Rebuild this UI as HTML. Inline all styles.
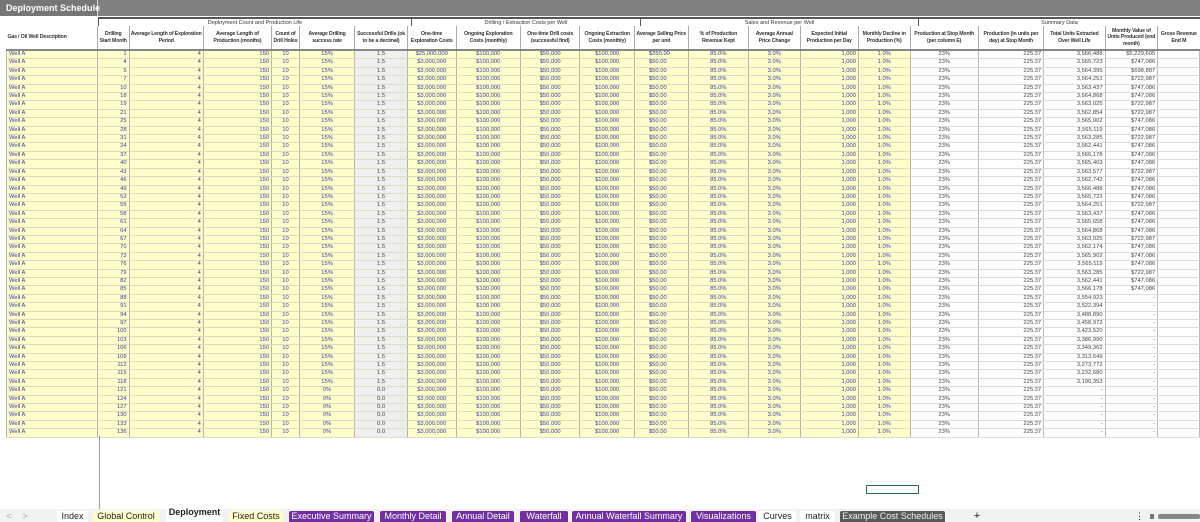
<!DOCTYPE html>
<html><head><meta charset="utf-8">
<style>
*{margin:0;padding:0;box-sizing:border-box}
body{width:1200px;height:522px;overflow:hidden;background:#fff;font-family:"Liberation Sans",sans-serif;position:relative}
.title{position:absolute;left:0;top:0;width:1200px;height:16px;background:#808080}
.title .lab{position:absolute;left:0;top:0;width:98px;height:16px;background:#767676;border-right:1px solid #ddd}
.title .txt{position:absolute;left:6px;top:0;color:#fff;font-weight:bold;font-size:9px;line-height:16px;white-space:nowrap}
.grp{position:absolute;top:17px;height:9px;border-top:2px solid #555;border-left:1px solid #555;font-size:5.5px;line-height:8px;text-align:center;color:#333}
table{position:absolute;left:6px;top:26px;border-collapse:collapse;table-layout:fixed;font-size:5.8px;color:#3a3aa0}
th{font-weight:bold;color:#333;height:24px;font-size:5.2px;letter-spacing:-0.15px;line-height:6.5px;border-left:1px solid #aaa;border-bottom:2px solid #888;text-align:center;background:#fff;vertical-align:middle;padding:0 1px}
th:first-child{text-align:left;border-left:none}
td{height:8.39px;line-height:7.4px;border-left:1px solid #b8b8a0;border-right:1px solid #b8b8a0;border-bottom:1px solid #dcdcc0;padding:0 2px;white-space:nowrap;overflow:hidden;background:#ffffcc;vertical-align:middle}
td:nth-child(1){text-align:left}
td:nth-child(2),td:nth-child(3),td:nth-child(4){text-align:right}
td:nth-child(5),td:nth-child(6),td:nth-child(7){text-align:center}
td:nth-child(7){background:#efefef;color:#444}
td:nth-child(n+8){text-align:center}
td:nth-child(12){text-align:left;padding-left:14px}
td:nth-child(15){text-align:right}
td:nth-child(n+17){background:#fff;border-left-color:#bbb;border-right-color:#bbb;border-bottom-color:#ddd}
td:nth-child(17){color:#444}
td:nth-child(18),td:nth-child(19),td:nth-child(20){text-align:right;color:#444}
.vline{position:absolute;left:99px;top:436px;width:1px;height:73px;background:#999}
.sel{position:absolute;left:866px;top:485px;width:53px;height:9px;border:1px solid #217346}
.tabs{position:absolute;left:0;top:509px;width:1200px;height:13px;background:#f2f2f2;font-size:9px}
.tab{position:absolute;top:2px;height:11px;line-height:11px;text-align:center;color:#222;border-radius:2px 2px 0 0;white-space:nowrap}
.y{background:#ffffcc}.p{background:#7030a0;color:#fff}.w{background:#fff}
</style></head><body>
<div class="title"><div class="lab"></div><div class="txt">Deployment Schedule</div></div>
<div class="grp" style="left:98px;width:313px">Deployment Count and Production Life</div>
<div class="grp" style="left:411px;width:229px">Drilling / Extraction Costs per Well</div>
<div class="grp" style="left:640px;width:278px">Sales and Revenue per Well</div>
<div class="grp" style="left:918px;width:282px">Summary Data</div>
<table>
<colgroup><col style="width:92px"><col style="width:32px"><col style="width:75px"><col style="width:69px"><col style="width:28px"><col style="width:56px"><col style="width:53px"><col style="width:49px"><col style="width:65px"><col style="width:60px"><col style="width:55px"><col style="width:54px"><col style="width:61px"><col style="width:52px"><col style="width:59px"><col style="width:52px"><col style="width:69px"><col style="width:66px"><col style="width:62px"><col style="width:53px"><col style="width:42px"></colgroup>
<tr><th>Gas / Oil Well Description</th><th>Drilling Start Month</th><th>Average Length of Exploration Period</th><th>Average Length of Production (months)</th><th>Count of Drill Holes</th><th>Average Drilling success rate</th><th>Successful Drills (ok to be a decimal)</th><th>One-time Exploration Costs</th><th>Ongoing Exploration Costs (monthly)</th><th>One-time Drill costs (successful find)</th><th>Ongoing Extraction Costs (monthly)</th><th>Average Selling Price per unit</th><th>% of Production Revenue Kept</th><th>Average Annual Price Change</th><th>Expected Initial Production per Day</th><th>Monthly Decline in Production (%)</th><th>Production at Stop Month (per column E)</th><th>Production (in units per day) at Stop Month</th><th>Total Units Extracted Over Well Life</th><th>Monthly Value of Units Produced (end month)</th><th>Gross Revenue End M</th></tr>
<tr><td>Well A</td><td>1</td><td>4</td><td>150</td><td>10</td><td>15%</td><td>1.5</td><td>$25,000,000</td><td>$100,000</td><td>$50,000</td><td>$100,000</td><td>$350.00</td><td>85.0%</td><td>3.0%</td><td>1,000</td><td>1.0%</td><td>23%</td><td>225.37</td><td>3,566,488</td><td>$5,229,605</td><td></td></tr>
<tr><td>Well A</td><td>4</td><td>4</td><td>150</td><td>10</td><td>15%</td><td>1.5</td><td>$3,000,000</td><td>$100,000</td><td>$50,000</td><td>$100,000</td><td>$50.00</td><td>85.0%</td><td>3.0%</td><td>1,000</td><td>1.0%</td><td>23%</td><td>225.37</td><td>3,565,723</td><td>$747,086</td><td></td></tr>
<tr><td>Well A</td><td>5</td><td>4</td><td>150</td><td>10</td><td>15%</td><td>1.5</td><td>$3,000,000</td><td>$100,000</td><td>$50,000</td><td>$100,000</td><td>$50.00</td><td>85.0%</td><td>3.0%</td><td>1,000</td><td>1.0%</td><td>23%</td><td>225.37</td><td>3,564,395</td><td>$698,887</td><td></td></tr>
<tr><td>Well A</td><td>7</td><td>4</td><td>150</td><td>10</td><td>15%</td><td>1.5</td><td>$3,000,000</td><td>$100,000</td><td>$50,000</td><td>$100,000</td><td>$50.00</td><td>85.0%</td><td>3.0%</td><td>1,000</td><td>1.0%</td><td>23%</td><td>225.37</td><td>3,564,251</td><td>$722,987</td><td></td></tr>
<tr><td>Well A</td><td>10</td><td>4</td><td>150</td><td>10</td><td>15%</td><td>1.5</td><td>$3,000,000</td><td>$100,000</td><td>$50,000</td><td>$100,000</td><td>$50.00</td><td>85.0%</td><td>3.0%</td><td>1,000</td><td>1.0%</td><td>23%</td><td>225.37</td><td>3,563,437</td><td>$747,086</td><td></td></tr>
<tr><td>Well A</td><td>18</td><td>4</td><td>150</td><td>10</td><td>15%</td><td>1.5</td><td>$3,000,000</td><td>$100,000</td><td>$50,000</td><td>$100,000</td><td>$50.00</td><td>85.0%</td><td>3.0%</td><td>1,000</td><td>1.0%</td><td>23%</td><td>225.37</td><td>3,564,868</td><td>$747,086</td><td></td></tr>
<tr><td>Well A</td><td>19</td><td>4</td><td>150</td><td>10</td><td>15%</td><td>1.5</td><td>$3,000,000</td><td>$100,000</td><td>$50,000</td><td>$100,000</td><td>$50.00</td><td>85.0%</td><td>3.0%</td><td>1,000</td><td>1.0%</td><td>23%</td><td>225.37</td><td>3,563,025</td><td>$722,987</td><td></td></tr>
<tr><td>Well A</td><td>21</td><td>4</td><td>150</td><td>10</td><td>15%</td><td>1.5</td><td>$3,000,000</td><td>$100,000</td><td>$50,000</td><td>$100,000</td><td>$50.00</td><td>85.0%</td><td>3.0%</td><td>1,000</td><td>1.0%</td><td>23%</td><td>225.37</td><td>3,562,854</td><td>$722,987</td><td></td></tr>
<tr><td>Well A</td><td>25</td><td>4</td><td>150</td><td>10</td><td>15%</td><td>1.5</td><td>$3,000,000</td><td>$100,000</td><td>$50,000</td><td>$100,000</td><td>$50.00</td><td>85.0%</td><td>3.0%</td><td>1,000</td><td>1.0%</td><td>23%</td><td>225.37</td><td>3,565,902</td><td>$747,086</td><td></td></tr>
<tr><td>Well A</td><td>28</td><td>4</td><td>150</td><td>10</td><td>15%</td><td>1.5</td><td>$3,000,000</td><td>$100,000</td><td>$50,000</td><td>$100,000</td><td>$50.00</td><td>85.0%</td><td>3.0%</td><td>1,000</td><td>1.0%</td><td>23%</td><td>225.37</td><td>3,565,119</td><td>$747,086</td><td></td></tr>
<tr><td>Well A</td><td>31</td><td>4</td><td>150</td><td>10</td><td>15%</td><td>1.5</td><td>$3,000,000</td><td>$100,000</td><td>$50,000</td><td>$100,000</td><td>$50.00</td><td>85.0%</td><td>3.0%</td><td>1,000</td><td>1.0%</td><td>23%</td><td>225.37</td><td>3,563,285</td><td>$722,987</td><td></td></tr>
<tr><td>Well A</td><td>34</td><td>4</td><td>150</td><td>10</td><td>15%</td><td>1.5</td><td>$3,000,000</td><td>$100,000</td><td>$50,000</td><td>$100,000</td><td>$50.00</td><td>85.0%</td><td>3.0%</td><td>1,000</td><td>1.0%</td><td>23%</td><td>225.37</td><td>3,562,441</td><td>$747,086</td><td></td></tr>
<tr><td>Well A</td><td>37</td><td>4</td><td>150</td><td>10</td><td>15%</td><td>1.5</td><td>$3,000,000</td><td>$100,000</td><td>$50,000</td><td>$100,000</td><td>$50.00</td><td>85.0%</td><td>3.0%</td><td>1,000</td><td>1.0%</td><td>23%</td><td>225.37</td><td>3,566,178</td><td>$747,086</td><td></td></tr>
<tr><td>Well A</td><td>40</td><td>4</td><td>150</td><td>10</td><td>15%</td><td>1.5</td><td>$3,000,000</td><td>$100,000</td><td>$50,000</td><td>$100,000</td><td>$50.00</td><td>85.0%</td><td>3.0%</td><td>1,000</td><td>1.0%</td><td>23%</td><td>225.37</td><td>3,565,403</td><td>$747,086</td><td></td></tr>
<tr><td>Well A</td><td>43</td><td>4</td><td>150</td><td>10</td><td>15%</td><td>1.5</td><td>$3,000,000</td><td>$100,000</td><td>$50,000</td><td>$100,000</td><td>$50.00</td><td>85.0%</td><td>3.0%</td><td>1,000</td><td>1.0%</td><td>23%</td><td>225.37</td><td>3,563,577</td><td>$722,987</td><td></td></tr>
<tr><td>Well A</td><td>46</td><td>4</td><td>150</td><td>10</td><td>15%</td><td>1.5</td><td>$3,000,000</td><td>$100,000</td><td>$50,000</td><td>$100,000</td><td>$50.00</td><td>85.0%</td><td>3.0%</td><td>1,000</td><td>1.0%</td><td>23%</td><td>225.37</td><td>3,562,742</td><td>$747,086</td><td></td></tr>
<tr><td>Well A</td><td>49</td><td>4</td><td>150</td><td>10</td><td>15%</td><td>1.5</td><td>$3,000,000</td><td>$100,000</td><td>$50,000</td><td>$100,000</td><td>$50.00</td><td>85.0%</td><td>3.0%</td><td>1,000</td><td>1.0%</td><td>23%</td><td>225.37</td><td>3,566,488</td><td>$747,086</td><td></td></tr>
<tr><td>Well A</td><td>52</td><td>4</td><td>150</td><td>10</td><td>15%</td><td>1.5</td><td>$3,000,000</td><td>$100,000</td><td>$50,000</td><td>$100,000</td><td>$50.00</td><td>85.0%</td><td>3.0%</td><td>1,000</td><td>1.0%</td><td>23%</td><td>225.37</td><td>3,565,723</td><td>$747,086</td><td></td></tr>
<tr><td>Well A</td><td>55</td><td>4</td><td>150</td><td>10</td><td>15%</td><td>1.5</td><td>$3,000,000</td><td>$100,000</td><td>$50,000</td><td>$100,000</td><td>$50.00</td><td>85.0%</td><td>3.0%</td><td>1,000</td><td>1.0%</td><td>23%</td><td>225.37</td><td>3,564,251</td><td>$722,987</td><td></td></tr>
<tr><td>Well A</td><td>58</td><td>4</td><td>150</td><td>10</td><td>15%</td><td>1.5</td><td>$3,000,000</td><td>$100,000</td><td>$50,000</td><td>$100,000</td><td>$50.00</td><td>85.0%</td><td>3.0%</td><td>1,000</td><td>1.0%</td><td>23%</td><td>225.37</td><td>3,563,437</td><td>$747,086</td><td></td></tr>
<tr><td>Well A</td><td>61</td><td>4</td><td>150</td><td>10</td><td>15%</td><td>1.5</td><td>$3,000,000</td><td>$100,000</td><td>$50,000</td><td>$100,000</td><td>$50.00</td><td>85.0%</td><td>3.0%</td><td>1,000</td><td>1.0%</td><td>23%</td><td>225.37</td><td>3,565,658</td><td>$747,086</td><td></td></tr>
<tr><td>Well A</td><td>64</td><td>4</td><td>150</td><td>10</td><td>15%</td><td>1.5</td><td>$3,000,000</td><td>$100,000</td><td>$50,000</td><td>$100,000</td><td>$50.00</td><td>85.0%</td><td>3.0%</td><td>1,000</td><td>1.0%</td><td>23%</td><td>225.37</td><td>3,564,868</td><td>$747,086</td><td></td></tr>
<tr><td>Well A</td><td>67</td><td>4</td><td>150</td><td>10</td><td>15%</td><td>1.5</td><td>$3,000,000</td><td>$100,000</td><td>$50,000</td><td>$100,000</td><td>$50.00</td><td>85.0%</td><td>3.0%</td><td>1,000</td><td>1.0%</td><td>23%</td><td>225.37</td><td>3,563,025</td><td>$722,987</td><td></td></tr>
<tr><td>Well A</td><td>70</td><td>4</td><td>150</td><td>10</td><td>15%</td><td>1.5</td><td>$3,000,000</td><td>$100,000</td><td>$50,000</td><td>$100,000</td><td>$50.00</td><td>85.0%</td><td>3.0%</td><td>1,000</td><td>1.0%</td><td>23%</td><td>225.37</td><td>3,562,174</td><td>$747,086</td><td></td></tr>
<tr><td>Well A</td><td>73</td><td>4</td><td>150</td><td>10</td><td>15%</td><td>1.5</td><td>$3,000,000</td><td>$100,000</td><td>$50,000</td><td>$100,000</td><td>$50.00</td><td>85.0%</td><td>3.0%</td><td>1,000</td><td>1.0%</td><td>23%</td><td>225.37</td><td>3,565,902</td><td>$747,086</td><td></td></tr>
<tr><td>Well A</td><td>76</td><td>4</td><td>150</td><td>10</td><td>15%</td><td>1.5</td><td>$3,000,000</td><td>$100,000</td><td>$50,000</td><td>$100,000</td><td>$50.00</td><td>85.0%</td><td>3.0%</td><td>1,000</td><td>1.0%</td><td>23%</td><td>225.37</td><td>3,565,119</td><td>$747,086</td><td></td></tr>
<tr><td>Well A</td><td>79</td><td>4</td><td>150</td><td>10</td><td>15%</td><td>1.5</td><td>$3,000,000</td><td>$100,000</td><td>$50,000</td><td>$100,000</td><td>$50.00</td><td>85.0%</td><td>3.0%</td><td>1,000</td><td>1.0%</td><td>23%</td><td>225.37</td><td>3,563,285</td><td>$722,987</td><td></td></tr>
<tr><td>Well A</td><td>82</td><td>4</td><td>150</td><td>10</td><td>15%</td><td>1.5</td><td>$3,000,000</td><td>$100,000</td><td>$50,000</td><td>$100,000</td><td>$50.00</td><td>85.0%</td><td>3.0%</td><td>1,000</td><td>1.0%</td><td>23%</td><td>225.37</td><td>3,562,441</td><td>$747,086</td><td></td></tr>
<tr><td>Well A</td><td>85</td><td>4</td><td>150</td><td>10</td><td>15%</td><td>1.5</td><td>$3,000,000</td><td>$100,000</td><td>$50,000</td><td>$100,000</td><td>$50.00</td><td>85.0%</td><td>3.0%</td><td>1,000</td><td>1.0%</td><td>23%</td><td>225.37</td><td>3,566,178</td><td>$747,086</td><td></td></tr>
<tr><td>Well A</td><td>88</td><td>4</td><td>150</td><td>10</td><td>15%</td><td>1.5</td><td>$3,000,000</td><td>$100,000</td><td>$50,000</td><td>$100,000</td><td>$50.00</td><td>85.0%</td><td>3.0%</td><td>1,000</td><td>1.0%</td><td>23%</td><td>225.37</td><td>3,554,923</td><td>-</td><td></td></tr>
<tr><td>Well A</td><td>91</td><td>4</td><td>150</td><td>10</td><td>15%</td><td>1.5</td><td>$3,000,000</td><td>$100,000</td><td>$50,000</td><td>$100,000</td><td>$50.00</td><td>85.0%</td><td>3.0%</td><td>1,000</td><td>1.0%</td><td>23%</td><td>225.37</td><td>3,522,394</td><td>-</td><td></td></tr>
<tr><td>Well A</td><td>94</td><td>4</td><td>150</td><td>10</td><td>15%</td><td>1.5</td><td>$3,000,000</td><td>$100,000</td><td>$50,000</td><td>$100,000</td><td>$50.00</td><td>85.0%</td><td>3.0%</td><td>1,000</td><td>1.0%</td><td>23%</td><td>225.37</td><td>3,488,890</td><td>-</td><td></td></tr>
<tr><td>Well A</td><td>97</td><td>4</td><td>150</td><td>10</td><td>15%</td><td>1.5</td><td>$3,000,000</td><td>$100,000</td><td>$50,000</td><td>$100,000</td><td>$50.00</td><td>85.0%</td><td>3.0%</td><td>1,000</td><td>1.0%</td><td>23%</td><td>225.37</td><td>3,458,972</td><td>-</td><td></td></tr>
<tr><td>Well A</td><td>100</td><td>4</td><td>150</td><td>10</td><td>15%</td><td>1.5</td><td>$3,000,000</td><td>$100,000</td><td>$50,000</td><td>$100,000</td><td>$50.00</td><td>85.0%</td><td>3.0%</td><td>1,000</td><td>1.0%</td><td>23%</td><td>225.37</td><td>3,423,520</td><td>-</td><td></td></tr>
<tr><td>Well A</td><td>103</td><td>4</td><td>150</td><td>10</td><td>15%</td><td>1.5</td><td>$3,000,000</td><td>$100,000</td><td>$50,000</td><td>$100,000</td><td>$50.00</td><td>85.0%</td><td>3.0%</td><td>1,000</td><td>1.0%</td><td>23%</td><td>225.37</td><td>3,386,990</td><td>-</td><td></td></tr>
<tr><td>Well A</td><td>106</td><td>4</td><td>150</td><td>10</td><td>15%</td><td>1.5</td><td>$3,000,000</td><td>$100,000</td><td>$50,000</td><td>$100,000</td><td>$50.00</td><td>85.0%</td><td>3.0%</td><td>1,000</td><td>1.0%</td><td>23%</td><td>225.37</td><td>3,349,362</td><td>-</td><td></td></tr>
<tr><td>Well A</td><td>109</td><td>4</td><td>150</td><td>10</td><td>15%</td><td>1.5</td><td>$3,000,000</td><td>$100,000</td><td>$50,000</td><td>$100,000</td><td>$50.00</td><td>85.0%</td><td>3.0%</td><td>1,000</td><td>1.0%</td><td>23%</td><td>225.37</td><td>3,313,649</td><td>-</td><td></td></tr>
<tr><td>Well A</td><td>112</td><td>4</td><td>150</td><td>10</td><td>15%</td><td>1.5</td><td>$3,000,000</td><td>$100,000</td><td>$50,000</td><td>$100,000</td><td>$50.00</td><td>85.0%</td><td>3.0%</td><td>1,000</td><td>1.0%</td><td>23%</td><td>225.37</td><td>3,273,772</td><td>-</td><td></td></tr>
<tr><td>Well A</td><td>115</td><td>4</td><td>150</td><td>10</td><td>15%</td><td>1.5</td><td>$3,000,000</td><td>$100,000</td><td>$50,000</td><td>$100,000</td><td>$50.00</td><td>85.0%</td><td>3.0%</td><td>1,000</td><td>1.0%</td><td>23%</td><td>225.37</td><td>3,232,680</td><td>-</td><td></td></tr>
<tr><td>Well A</td><td>118</td><td>4</td><td>150</td><td>10</td><td>15%</td><td>1.5</td><td>$3,000,000</td><td>$100,000</td><td>$50,000</td><td>$100,000</td><td>$50.00</td><td>85.0%</td><td>3.0%</td><td>1,000</td><td>1.0%</td><td>23%</td><td>225.37</td><td>3,190,353</td><td>-</td><td></td></tr>
<tr><td>Well A</td><td>121</td><td>4</td><td>150</td><td>10</td><td>0%</td><td>0.0</td><td>$3,000,000</td><td>$100,000</td><td>$50,000</td><td>$100,000</td><td>$50.00</td><td>85.0%</td><td>3.0%</td><td>1,000</td><td>1.0%</td><td>23%</td><td>225.37</td><td>-</td><td>-</td><td></td></tr>
<tr><td>Well A</td><td>124</td><td>4</td><td>150</td><td>10</td><td>0%</td><td>0.0</td><td>$3,000,000</td><td>$100,000</td><td>$50,000</td><td>$100,000</td><td>$50.00</td><td>85.0%</td><td>3.0%</td><td>1,000</td><td>1.0%</td><td>23%</td><td>225.37</td><td>-</td><td>-</td><td></td></tr>
<tr><td>Well A</td><td>127</td><td>4</td><td>150</td><td>10</td><td>0%</td><td>0.0</td><td>$3,000,000</td><td>$100,000</td><td>$50,000</td><td>$100,000</td><td>$50.00</td><td>85.0%</td><td>3.0%</td><td>1,000</td><td>1.0%</td><td>23%</td><td>225.37</td><td>-</td><td>-</td><td></td></tr>
<tr><td>Well A</td><td>130</td><td>4</td><td>150</td><td>10</td><td>0%</td><td>0.0</td><td>$3,000,000</td><td>$100,000</td><td>$50,000</td><td>$100,000</td><td>$50.00</td><td>85.0%</td><td>3.0%</td><td>1,000</td><td>1.0%</td><td>23%</td><td>225.37</td><td>-</td><td>-</td><td></td></tr>
<tr><td>Well A</td><td>133</td><td>4</td><td>150</td><td>10</td><td>0%</td><td>0.0</td><td>$3,000,000</td><td>$100,000</td><td>$50,000</td><td>$100,000</td><td>$50.00</td><td>85.0%</td><td>3.0%</td><td>1,000</td><td>1.0%</td><td>23%</td><td>225.37</td><td>-</td><td>-</td><td></td></tr>
<tr><td>Well A</td><td>136</td><td>4</td><td>150</td><td>10</td><td>0%</td><td>0.0</td><td>$3,000,000</td><td>$100,000</td><td>$50,000</td><td>$100,000</td><td>$50.00</td><td>85.0%</td><td>3.0%</td><td>1,000</td><td>1.0%</td><td>23%</td><td>225.37</td><td>-</td><td>-</td><td></td></tr>
</table>
<div class="vline"></div>
<div class="sel"></div>
<div class="tabs">
<span class="tab" style="left:4px;width:10px;color:#aaa">&lt;</span>
<span class="tab" style="left:20px;width:10px;color:#aaa">&gt;</span>
<span class="tab w" style="left:57px;width:31px">Index</span>
<span class="tab y" style="left:93px;width:66px">Global Control</span>
<span class="tab w" style="left:166px;width:57px;top:-3px;height:16px;line-height:13px;font-weight:bold">Deployment</span>
<span class="tab y" style="left:229px;width:54px">Fixed Costs</span>
<span class="tab p" style="left:289px;width:85px">Executive Summary</span>
<span class="tab p" style="left:380px;width:66px">Monthly Detail</span>
<span class="tab p" style="left:452px;width:62px">Annual Detail</span>
<span class="tab p" style="left:520px;width:48px">Waterfall</span>
<span class="tab p" style="left:572px;width:114px">Annual Waterfall Summary</span>
<span class="tab p" style="left:691px;width:65px">Visualizations</span>
<span class="tab w" style="left:759px;width:37px">Curves</span>
<span class="tab w" style="left:800px;width:35px">matrix</span>
<span class="tab" style="left:840px;width:105px;background:#595959;color:#eee">Example Cost Schedules</span>
<span class="tab" style="left:971px;width:12px;font-size:11px">+</span>
<span class="tab" style="left:1135px;width:6px">⋮</span>
<span style="position:absolute;left:1150px;top:5px;width:4px;height:5px;background:#777"></span>
<span style="position:absolute;left:1158px;top:5px;width:42px;height:5px;background:#888;border-radius:2px"></span>
</div>
</body></html>
